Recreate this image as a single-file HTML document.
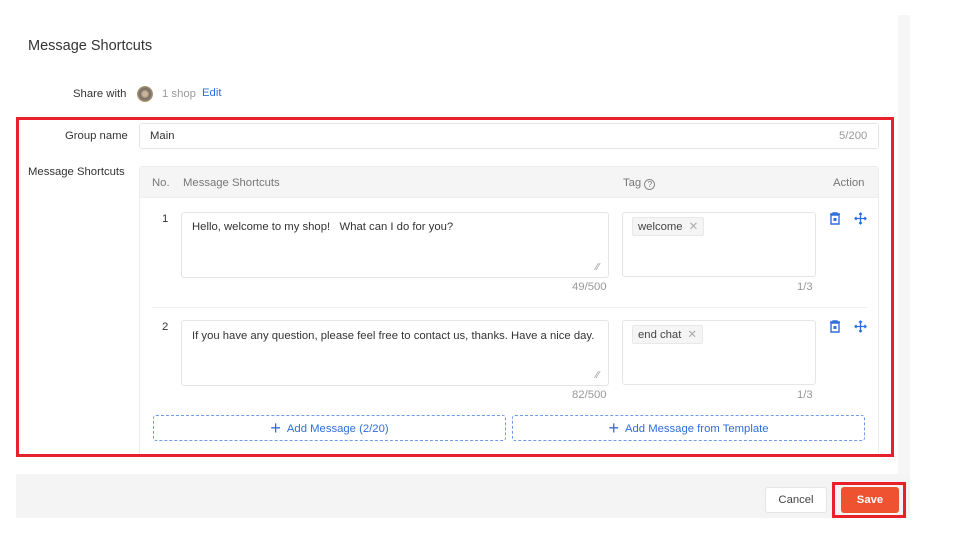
<!DOCTYPE html>
<html><head><meta charset="utf-8"><style>
*{margin:0;padding:0;box-sizing:border-box}
body{width:960px;height:540px;background:#fff;font-family:"Liberation Sans",Arial,sans-serif;font-size:11.3px;color:#333;position:relative;overflow:hidden}
.a{position:absolute;white-space:nowrap}
.box{position:absolute;border:1px solid #e5e5e5;border-radius:3px;background:#fff}
.g{color:#999}
.tag{position:absolute;background:#f5f5f5;border:1px solid #e8e8e8;border-radius:2px;padding:2px 5px;color:#444;white-space:nowrap}
.tag span{color:#aaa;margin-left:6px}
.btn{position:absolute;border:1px dashed #6f9be8;border-radius:3px;color:#2e6fdc;text-align:center;line-height:24px}
.btn b{font-weight:normal;font-size:18px;vertical-align:-2px;margin-right:6px}
</style></head><body>
<div class="a" style="left:898px;top:15px;width:12px;height:503px;background:#f6f6f6"></div>
<div class="a" style="left:16px;top:474px;width:894px;height:44px;background:#f4f4f4"></div>
<div class="a" style="left:28px;top:38px;font-size:14.5px;color:#333">Message Shortcuts</div>
<div class="a" style="left:73px;top:88px">Share with</div>
<div class="a" style="left:137px;top:86px;width:16px;height:16px;border-radius:50%;background:radial-gradient(circle,#c9b59a 20%,#6f6a63 45%,#b49a75 70%,#5c6b77)"></div>
<div class="a g" style="left:162px;top:88px">1 shop</div>
<div class="a" style="left:202px;top:87px;color:#2e6fdc">Edit</div>
<div class="a" style="left:16px;top:117px;width:878px;height:340px;border:3px solid #e8202a"></div>
<div class="a" style="left:65px;top:130px">Group name</div>
<div class="box" style="left:139px;top:123px;width:740px;height:26px"></div>
<div class="a" style="left:150px;top:130px">Main</div>
<div class="a g" style="left:839px;top:130px">5/200</div>
<div class="a" style="left:28px;top:166px">Message Shortcuts</div>
<div class="a" style="left:139px;top:166px;width:740px;height:288px;border:1px solid #ececec;border-bottom:none;border-radius:3px 3px 0 0"></div>
<div class="a" style="left:140px;top:167px;width:738px;height:31px;background:#f5f5f5;border-bottom:1px solid #eee"></div>
<div class="a" style="left:152px;top:177px;color:#777">No.</div>
<div class="a" style="left:183px;top:177px;color:#777">Message Shortcuts</div>
<div class="a" style="left:623px;top:177px;color:#777">Tag <span style="display:inline-block;width:11px;height:11px;border:1px solid #888;border-radius:50%;font-size:8px;line-height:9px;text-align:center;vertical-align:-1px">?</span></div>
<div class="a" style="left:833px;top:177px;color:#777">Action</div>

<div class="a" style="left:162px;top:213px">1</div>
<div class="box" style="left:181px;top:212px;width:428px;height:66px"></div>
<div class="a" style="left:192px;top:221px">Hello, welcome to my shop!&nbsp;&nbsp; What can I do for you?</div>
<div class="a g" style="left:596px;top:262px;font-size:10px">⁄⁄</div>
<div class="a g" style="left:572px;top:281px">49/500</div>
<div class="box" style="left:622px;top:212px;width:194px;height:65px"></div>
<div class="tag" style="left:632px;top:217px">welcome<span>✕</span></div>
<div class="a g" style="left:797px;top:281px">1/3</div>
<svg class="a" style="left:829px;top:212px" width="12" height="13" viewBox="0 0 12 13"><path d="M1 2h10M4 2V1h4v1M2 3h8v9H2z" fill="none" stroke="#2e6fdc" stroke-width="1.4"/><rect x="4.5" y="6" width="3" height="3" fill="#2e6fdc"/></svg>
<svg class="a" style="left:854px;top:212px" width="13" height="13" viewBox="0 0 13 13"><path d="M6.5 1v11M1 6.5h11M5 2.5l1.5-1.5 1.5 1.5M5 10.5l1.5 1.5 1.5-1.5M2.5 5L1 6.5 2.5 8M10.5 5L12 6.5 10.5 8" fill="none" stroke="#2e6fdc" stroke-width="1.3"/></svg>
<div class="a" style="left:152px;top:307px;width:715px;height:1px;background:#f0f0f0"></div>

<div class="a" style="left:162px;top:321px">2</div>
<div class="box" style="left:181px;top:320px;width:428px;height:66px"></div>
<div class="a" style="left:192px;top:330px">If you have any question, please feel free to contact us, thanks. Have a nice day.</div>
<div class="a g" style="left:596px;top:370px;font-size:10px">⁄⁄</div>
<div class="a g" style="left:572px;top:389px">82/500</div>
<div class="box" style="left:622px;top:320px;width:194px;height:65px"></div>
<div class="tag" style="left:632px;top:325px">end chat<span>✕</span></div>
<div class="a g" style="left:797px;top:389px">1/3</div>
<svg class="a" style="left:829px;top:320px" width="12" height="13" viewBox="0 0 12 13"><path d="M1 2h10M4 2V1h4v1M2 3h8v9H2z" fill="none" stroke="#2e6fdc" stroke-width="1.4"/><rect x="4.5" y="6" width="3" height="3" fill="#2e6fdc"/></svg>
<svg class="a" style="left:854px;top:320px" width="13" height="13" viewBox="0 0 13 13"><path d="M6.5 1v11M1 6.5h11M5 2.5l1.5-1.5 1.5 1.5M5 10.5l1.5 1.5 1.5-1.5M2.5 5L1 6.5 2.5 8M10.5 5L12 6.5 10.5 8" fill="none" stroke="#2e6fdc" stroke-width="1.3"/></svg>

<div class="btn" style="left:153px;top:415px;width:353px;height:26px"><b>+</b>Add Message (2/20)</div>
<div class="btn" style="left:512px;top:415px;width:353px;height:26px"><b>+</b>Add Message from Template</div>

<div class="a" style="left:765px;top:487px;width:62px;height:26px;background:#fff;border:1px solid #e5e5e5;border-radius:3px;text-align:center;line-height:24px;color:#444">Cancel</div>
<div class="a" style="left:832px;top:482px;width:74px;height:36px;border:3px solid #e8202a"></div>
<div class="a" style="left:841px;top:487px;width:58px;height:26px;background:#ee5230;border-radius:3px;text-align:center;line-height:26px;color:#fff;font-weight:bold">Save</div>
</body></html>
